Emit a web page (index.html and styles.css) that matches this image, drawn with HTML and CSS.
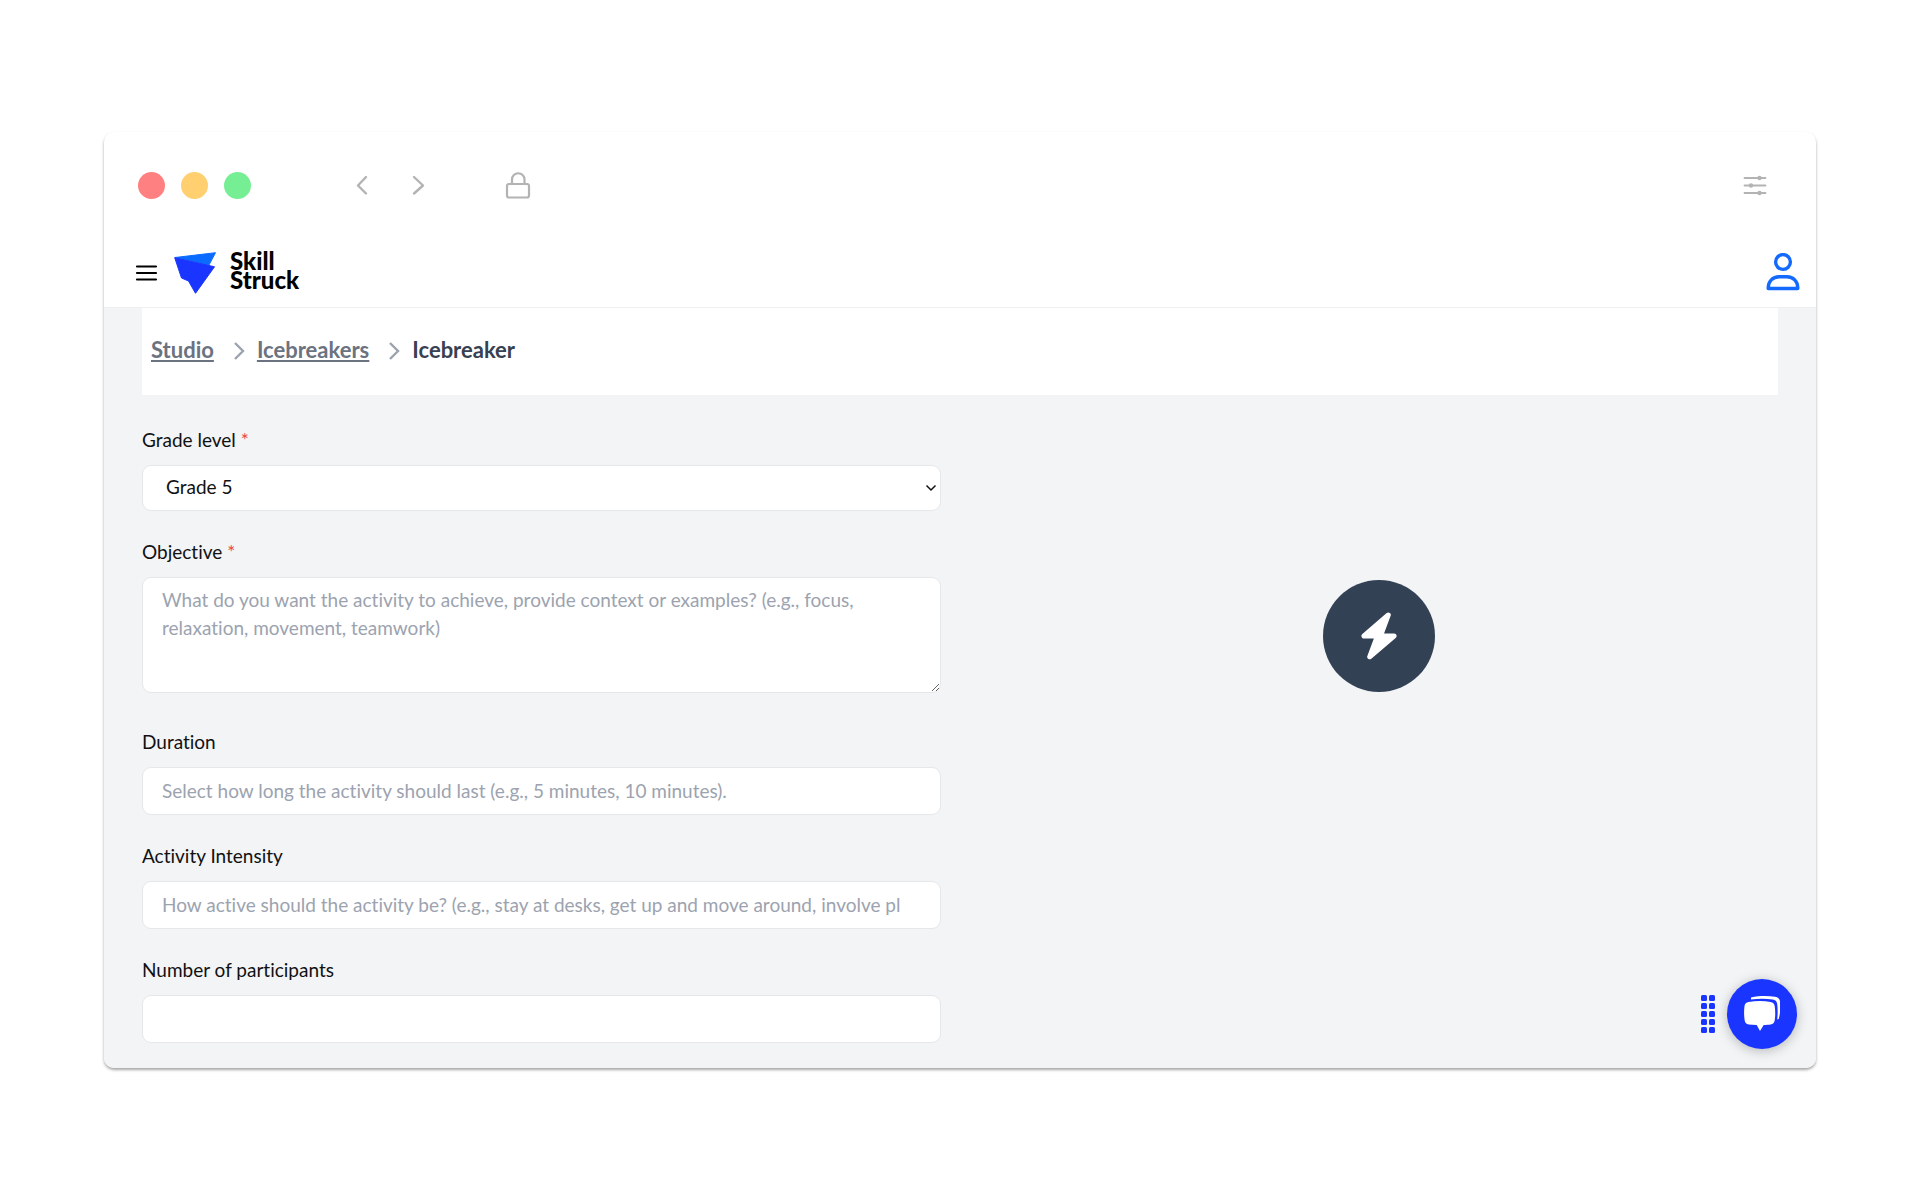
FILE: index.html
```
<!DOCTYPE html>
<html lang="en">
  <head>
    <meta charset="UTF-8" />
    <meta name="viewport" content="width=device-width, initial-scale=1.0" />
    <title>Icebreaker | Skill Struck</title>
    <link rel="stylesheet" href="styles.css">
  </head>
  <body>
    <div class="window">
      <div class="toolbar">
        <div class="lights">
          <span class="light light-red"></span>
          <span class="light light-yellow"></span>
          <span class="light light-green"></span>
        </div>
        <div class="history">
          <button type="button" class="icon-button" aria-label="Back">
            <svg width="24" height="24" viewBox="0 0 24 24" fill="none" stroke="#b3b3b3" stroke-width="2.400" stroke-linecap="round" stroke-linejoin="round"><path d="M16 4 8 12.500l8 8" /></svg>
          </button>
          <button type="button" class="icon-button" aria-label="Forward">
            <svg width="24" height="24" viewBox="0 0 24 24" fill="none" stroke="#b3b3b3" stroke-width="2.400" stroke-linecap="round" stroke-linejoin="round"><path d="M8 4l9 8.500-9 8" /></svg>
          </button>
        </div>
        <svg class="lock" width="28" height="28" viewBox="0 0 28 28" fill="none" stroke="#b3b3b3" stroke-width="2.200"><rect x="3" y="13" width="22" height="13.500" rx="2" /><path d="M8 13V8.500a6 6 0 0 1 12.500 0V13" /></svg>
        <button type="button" class="icon-button settings" aria-label="Settings">
          <svg width="24" height="24" viewBox="0 0 24 24" stroke="#b3b3b3" stroke-width="1.800" stroke-linecap="round" fill="#b3b3b3"><path d="M1.500 5h21M1.500 12.500h21M1.500 20h21" /><circle cx="16.500" cy="5" r="1.300" /><circle cx="8" cy="12.500" r="1.300" /><circle cx="16.500" cy="20" r="1.300" /></svg>
        </button>
      </div>

      <header class="header">
        <button type="button" class="icon-button" aria-label="Menu">
          <svg width="24" height="24" viewBox="0 0 24 24" stroke="#000" stroke-width="2.200" stroke-linecap="round"><path d="M3 5.500h19M3 12h19M3 18.500h19" /></svg>
        </button>
        <a href="#" class="logo">
          <svg width="42" height="42" viewBox="0 0 42 42" stroke-width="1" stroke-linejoin="round">
            <path fill="#0b6bff" stroke="#0b6bff" d="M1 5.500 41.500.700 35 13z" />
            <path fill="#1a35ff" stroke="#1a35ff" d="M.700 5.700 40.500 14.800 21.500 41.300 14.500 29 7.500 26z" />
          </svg>
          <span class="logo-text">Skill<br>Struck</span>
        </a>
        <button type="button" class="icon-button account" aria-label="Account">
          <svg width="34" height="40" viewBox="0 0 34 40" fill="none" stroke="#1469ff" stroke-width="3.400" stroke-linejoin="round"><circle cx="17" cy="9" r="7.400" /><path d="M2.200 35.500C2 28 7 23.800 13 23.800h8c6 0 11 4.200 10.800 11.700z" /></svg>
        </button>
      </header>

      <main class="page">
        <nav class="breadcrumbs" aria-label="Breadcrumb">
          <a href="#">Studio</a>
          <svg width="12" height="20" viewBox="0 0 12 20" fill="none" stroke="#9ca3af" stroke-width="2.400"><path d="M2 3l8 8-8 8" /></svg>
          <a href="#">Icebreakers</a>
          <svg width="12" height="20" viewBox="0 0 12 20" fill="none" stroke="#9ca3af" stroke-width="2.400"><path d="M2 3l8 8-8 8" /></svg>
          <span aria-current="page">Icebreaker</span>
        </nav>

        <div class="columns">
          <form class="form">
            <div class="field">
              <label for="grade">Grade level <span class="required">*</span></label>
              <select id="grade">
                <option>Grade 5</option>
              </select>
            </div>
            <div class="field field-area">
              <label for="objective">Objective <span class="required">*</span></label>
              <textarea id="objective" placeholder="What do you want the activity to achieve, provide context or examples? (e.g., focus, relaxation, movement, teamwork)"></textarea>
            </div>
            <div class="field">
              <label for="duration">Duration</label>
              <input type="text" id="duration" placeholder="Select how long the activity should last (e.g., 5 minutes, 10 minutes)." />
            </div>
            <div class="field">
              <label for="intensity">Activity Intensity</label>
              <input type="text" id="intensity" placeholder="How active should the activity be? (e.g., stay at desks, get up and move around, involve pl" />
            </div>
            <div class="field">
              <label for="participants">Number of participants</label>
              <input type="text" id="participants" />
            </div>
          </form>

          <div class="result">
            <div class="bolt">
              <svg width="36" height="48" viewBox="0 0 36 48" fill="#fff" stroke="#fff" stroke-width="5" stroke-linejoin="round"><path d="M27.300 3 3 24h13.500L8.700 44.800 33 24H19.500z" /></svg>
            </div>
          </div>
        </div>
      </main>

      <div class="chat">
        <svg class="chat-drag" width="14" height="38" viewBox="0 0 14 38" fill="#1a35ff">
          <rect width="6" height="6" rx="1.500" /><rect x="8" width="6" height="6" rx="1.500" />
          <rect y="8" width="6" height="6" rx="1.500" /><rect x="8" y="8" width="6" height="6" rx="1.500" />
          <rect y="16" width="6" height="6" rx="1.500" /><rect x="8" y="16" width="6" height="6" rx="1.500" />
          <rect y="24" width="6" height="6" rx="1.500" /><rect x="8" y="24" width="6" height="6" rx="1.500" />
          <rect y="32" width="6" height="6" rx="1.500" /><rect x="8" y="32" width="6" height="6" rx="1.500" />
        </svg>
        <button type="button" class="chat-button" aria-label="Open chat">
          <svg width="36" height="36" viewBox="0 0 36 36" fill="#fff">
            <path d="M7 1.500C15-.300 24-.300 31 .800c3 .400 4.500 1.800 5 4.700.600 6 .300 12-1.300 17.500l-1.500.500c.600-5 .600-11 0-15.500-.500-3-2-4-4.500-4.500C22 2.600 14 2.600 7 3.500z" />
            <path d="M4.500 6C12 4.700 20 4.700 26.500 6c2.500.400 3.800 1.500 4.200 4 .700 5 .700 10 0 14.500-.400 2.300-1.700 3.500-4 4-2 .300-4.200.400-7 .500L16 35l-3.300-6c-3 0-5.700-.200-8-.500-2.300-.400-3.700-1.700-4-4-.800-5-.800-9.500-.200-14.500.400-2.500 1.700-3.600 4-4z" />
          </svg>
        </button>
      </div>
    </div>
  </body>
</html>
```
FILE: styles.css
```
* {
  box-sizing: border-box;
}

body {
  margin: 0;
  padding: 132px 104px;
  background: #fff;
  color: #111;
  font-family: Lato, "Open Sans", sans-serif;
  font-size: 19px;
  font-variant-ligatures: none;
  line-height: 28px;
}

svg {
  display: block;
}

.window {
  position: relative;
  overflow: hidden;
  border-radius: 10px;
  background: #fff;
  box-shadow: 0 2px 3px rgba(0, 0, 0, 0.35);
}

.icon-button {
  padding: 0;
  border: 0;
  background: none;
  cursor: pointer;
}

/* browser toolbar */
.toolbar {
  display: flex;
  align-items: center;
  height: 106px;
  padding: 0 49px 0 34px;
}

.lights {
  display: flex;
  gap: 16px;
}

.light {
  width: 27px;
  height: 27px;
  border-radius: 50%;
}

.light-red {
  background: #ff8080;
}

.light-yellow {
  background: #ffcf70;
}

.light-green {
  background: #76ee94;
}

.history {
  display: flex;
  gap: 32px;
  margin-left: 99px;
}

.lock {
  margin-left: 74px;
}

.settings {
  margin-left: auto;
}

/* app header */
.header {
  display: flex;
  align-items: center;
  height: 69px;
  padding: 0 16px 0 30px;
}

.logo {
  display: flex;
  align-items: center;
  gap: 14px;
  margin-left: 16px;
  color: #000;
  font-size: 24px;
  font-weight: 900;
  line-height: 19px;
  text-decoration: none;
}

.logo-text {
  padding-bottom: 5px;
}

.account {
  margin-left: auto;
}

/* page */
.page {
  padding: 0 38px 25px;
  border-top: 1px solid #eceef0;
  background: #f2f4f6;
}

.breadcrumbs {
  display: flex;
  align-items: center;
  height: 87px;
  padding: 0 9px 4px;
  background: #fff;
  color: #374151;
  font-size: 22px;
  font-weight: 700;
}

.breadcrumbs a {
  color: #6b7280;
  text-underline-offset: 2px;
}

.breadcrumbs svg {
  margin: 0 12px 0 19px;
}

.columns {
  display: grid;
  grid-template-columns: 1fr 1fr;
  gap: 38px;
  padding-top: 31px;
}

.form {
  display: flex;
  flex-direction: column;
  gap: 27px;
}

.field {
  display: flex;
  flex-direction: column;
  gap: 11px;
}

.field-area {
  margin-bottom: 8px;
}

.required {
  color: #ef4444;
}

input,
select,
textarea {
  width: 100%;
  height: 48px;
  margin: 0;
  padding: 8px 19px 10px;
  border: 1px solid #e5e7eb;
  border-radius: 9px;
  background: #fff;
  color: #111;
  font: inherit;
}

select {
  height: 46px;
  padding: 0 23px 2px;
  appearance: none;
  background: #fff url("data:image/svg+xml,%3Csvg xmlns='http://www.w3.org/2000/svg' width='12' height='8' fill='none' stroke='%23111' stroke-width='1.500'%3E%3Cpath d='M1.500 1.500 6 6l4.500-4.500'/%3E%3C/svg%3E") no-repeat right 3px center;
}

textarea {
  height: 116px;
  resize: vertical;
}

::placeholder {
  color: #9ca3af;
  opacity: 1;
}

.result {
  display: flex;
  justify-content: center;
  padding-top: 154px;
}

.bolt {
  display: flex;
  align-items: center;
  justify-content: center;
  width: 112px;
  height: 112px;
  border-radius: 50%;
  background: #334155;
}

/* floating chat launcher */
.chat {
  position: absolute;
  right: 19px;
  bottom: 19px;
  display: flex;
  align-items: center;
  gap: 12px;
}

.chat-button {
  display: flex;
  align-items: center;
  justify-content: center;
  width: 70px;
  height: 70px;
  padding: 0;
  border: 0;
  border-radius: 50%;
  background: #1a35ff;
  box-shadow: 0 2px 12px rgba(0, 0, 0, 0.25);
  cursor: pointer;
}
```
